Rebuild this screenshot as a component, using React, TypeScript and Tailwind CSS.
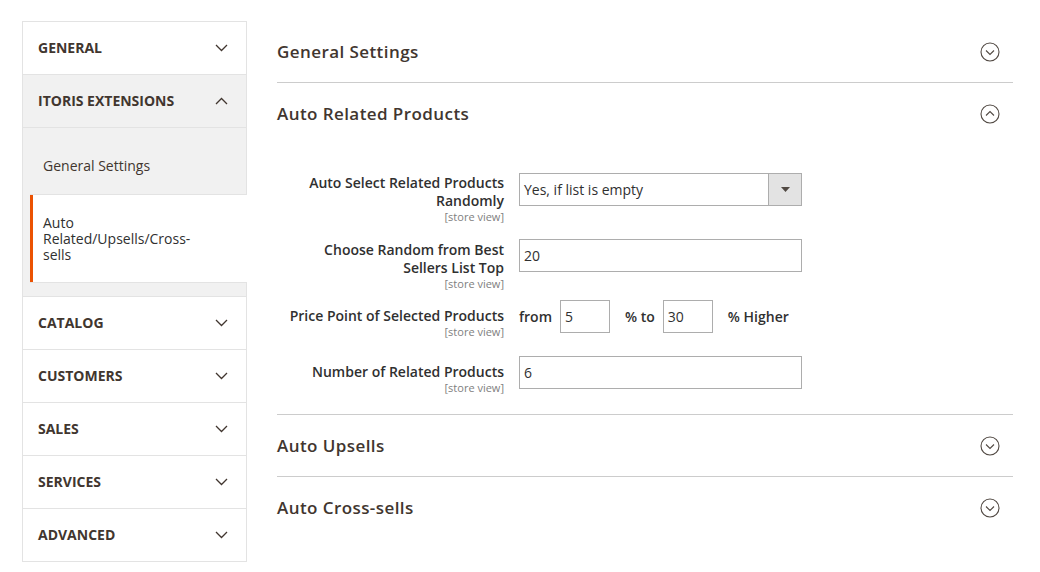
import React from 'react';

const FONT = "font-['Open_Sans',_'Liberation_Sans',_sans-serif]";

const Chevron = ({ up = false }: { up?: boolean }) => (
  <svg width="13" height="8" viewBox="0 0 13 8" fill="none" className="shrink-0">
    <polyline
      points={up ? '1,7 6.5,1.5 12,7' : '1,1 6.5,6.5 12,1'}
      stroke="#41362f"
      strokeWidth="1.3"
    />
  </svg>
);

const CircleChevron = ({ up = false }: { up?: boolean }) => (
  <svg width="20" height="20" viewBox="0 0 20 20" fill="none" className="shrink-0">
    <circle cx="10" cy="10" r="9" stroke="#514943" strokeWidth="1.1" />
    <polyline
      points={up ? '6,11.5 10,7.5 14,11.5' : '6,8.5 10,12.5 14,8.5'}
      stroke="#514943"
      strokeWidth="1.1"
    />
  </svg>
);

const NavTitle = ({
  label,
  up = false,
  gray = false,
  last = false
}: {
  label: string;
  up?: boolean;
  gray?: boolean;
  last?: boolean;
}) => (
  <div
    className={`flex items-center justify-between pb-px pl-[15px] pr-[18px] ${
      last ? 'h-[52px]' : 'h-[53px] border-b border-[#e3e3e3]'
    } ${gray ? 'bg-[#f1f1f1]' : 'bg-white'}`}
  >
    <span className="text-[14px] font-bold uppercase text-[#41362f]">{label}</span>
    <Chevron up={up} />
  </div>
);

const SectionHeader = ({ title, open = false, border = true }: { title: string; open?: boolean; border?: boolean }) => (
  <div
    className={`flex h-[62px] items-center justify-between pr-[13px] ${border ? 'border-b border-[#cccccc]' : ''}`}
  >
    <span className="text-[17px] font-semibold tracking-[0.025em] text-[#41362f]">{title}</span>
    <CircleChevron up={open} />
  </div>
);

const Scope = () => <div className="text-[11px] leading-[13px] text-[#808080]">[store view]</div>;

const inputCls =
  'h-[33px] border border-[#adadad] bg-white px-[4px] text-[14px] text-[#303030] flex items-center';

export default function App() {
  const collapsedAfter = ['Catalog', 'Customers', 'Sales', 'Services', 'Advanced'];

  return (
    <div className={`${FONT} flex min-h-[572px] bg-white pl-[22px] pt-[21px]`}>
      {/* sidebar */}
      <div className="w-[225px] self-start border border-[#e3e3e3] bg-white">
        <NavTitle label="General" />
        <div className="bg-[#f1f1f1] pb-[13px]">
          <NavTitle label="Itoris Extensions" up gray />
          <div className="h-[66px] pl-[20px] pt-[28px] text-[14px] leading-[19px] text-[#41362f]">
            General Settings
          </div>
          <div className="relative -mr-px ml-[7px] border-y border-[#e3e3e3] bg-white pb-[19px] pl-[13px] pr-[40px] pt-[20px] text-[14px] leading-[16px] text-[#303030]">
            <span className="absolute bottom-0 left-0 top-0 w-[3px] bg-[#eb5202]" />
            Auto Related/Upsells/Cross-sells
          </div>
        </div>
        <div className="border-t border-[#e3e3e3]">
          {collapsedAfter.map((s, i) => (
            <NavTitle key={s} label={s} last={i === collapsedAfter.length - 1} />
          ))}
        </div>
      </div>

      {/* main */}
      <div className="ml-[30px] w-[736px]">
        <SectionHeader title="General Settings" />
        <div className="border-b border-[#cccccc]">
          <SectionHeader title="Auto Related Products" open border={false} />
          <div className="pt-[28px]">
            <div className="flex h-[66px]">
              <div className="w-[227px] pt-[1px] text-right">
                <div className="text-[14px] font-semibold leading-[18px] text-[#303030]">
                  Auto Select Related Products Randomly
                </div>
                <Scope />
              </div>
              <div className="ml-[15px] flex h-[33px] w-[283px] border border-[#adadad] bg-white">
                <div className="flex flex-1 items-center px-[4px] text-[14px] text-[#303030]">
                  Yes, if list is empty
                </div>
                <div className="flex w-[33px] items-center justify-center border-l border-[#adadad] bg-[#e3e3e3]">
                  <svg width="9" height="5" viewBox="0 0 9 5">
                    <polygon points="0,0 9,0 4.5,5" fill="#514943" />
                  </svg>
                </div>
              </div>
            </div>

            <div className="flex h-[61px]">
              <div className="w-[227px] pt-[2px] text-right">
                <div className="ml-auto w-[190px] text-[14px] font-semibold leading-[18px] text-[#303030]">
                  Choose Random from Best Sellers List Top
                </div>
                <Scope />
              </div>
              <div className={`ml-[15px] w-[283px] ${inputCls}`}>20</div>
            </div>

            <div className="flex h-[56px]">
              <div className="w-[227px] pt-[7px] text-right">
                <div className="text-[14px] font-semibold leading-[18px] text-[#303030]">
                  Price Point of Selected Products
                </div>
                <Scope />
              </div>
              <div className="ml-[15px] flex h-[33px] items-center text-[14px] font-semibold text-[#303030]">
                <span>from</span>
                <div className={`ml-[8px] w-[50px] font-normal ${inputCls}`}>5</div>
                <span className="ml-[15px]">% to</span>
                <div className={`ml-[8px] w-[50px] font-normal ${inputCls}`}>30</div>
                <span className="ml-[15px]">% Higher</span>
              </div>
            </div>

            <div className="flex h-[58px]">
              <div className="w-[227px] pt-[7px] text-right">
                <div className="text-[14px] font-semibold leading-[18px] text-[#303030]">
                  Number of Related Products
                </div>
                <Scope />
              </div>
              <div className={`ml-[15px] w-[283px] ${inputCls}`}>6</div>
            </div>
          </div>
        </div>
        <SectionHeader title="Auto Upsells" />
        <SectionHeader title="Auto Cross-sells" border={false} />
      </div>
    </div>
  );
}
